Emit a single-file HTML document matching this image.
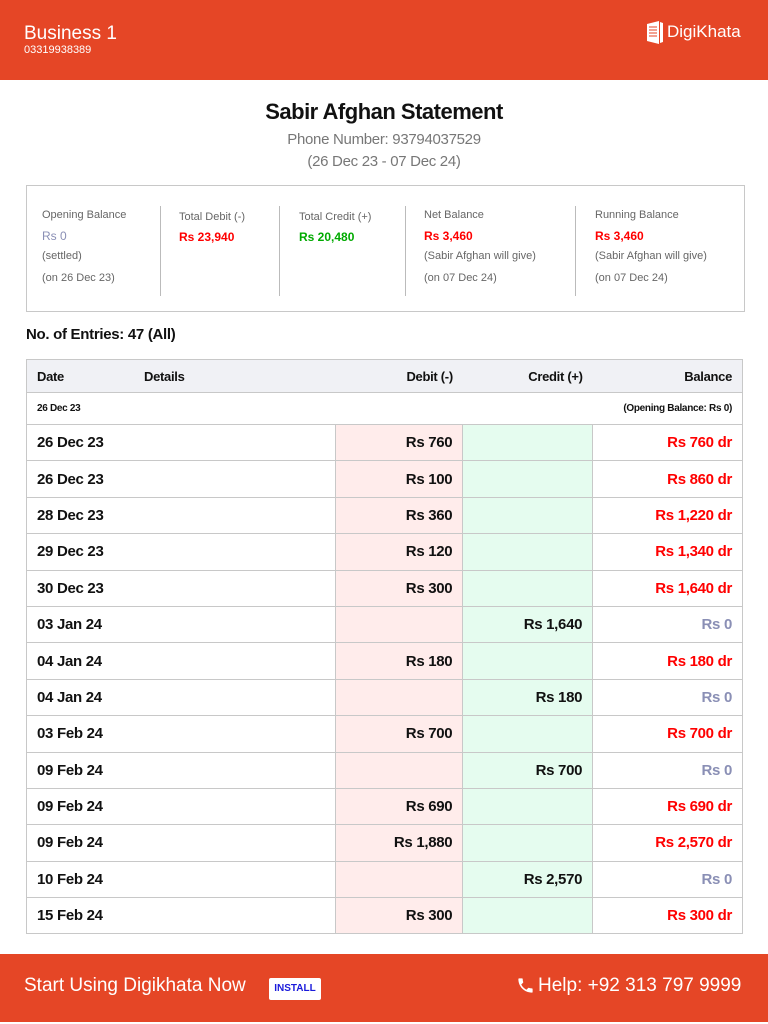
<!DOCTYPE html>
<html><head><meta charset="utf-8"><style>
*{margin:0;padding:0;box-sizing:border-box}
body{width:768px;height:1024px;background:#fff;font-family:"Liberation Sans",sans-serif;position:relative;overflow:hidden;color:#111}
.a{position:absolute;white-space:nowrap}
.hdr{position:absolute;left:0;top:0;width:768px;height:80px;background:#e54626}
.ftr{position:absolute;left:0;top:954px;width:768px;height:68px;background:#e54626}
.sb{border:1px solid #c8c8c8;position:absolute;left:26px;top:185px;width:719px;height:127px}
.vl{position:absolute;top:206px;width:1px;height:90px;background:#bbb}
.lbl{font-size:11px;color:#666}
.sm{font-size:11px;color:#666}
table{position:absolute;left:26px;top:359px;width:717px;border-collapse:collapse}
td{border:1px solid #c8c8c8;height:36.4px;font-size:15px;font-weight:bold;padding:0 10px;letter-spacing:-0.3px}
tr.h td{background:#f0f1f5;height:33px;font-size:13px;border-left:none;border-right:none}
tr.h td:first-child{border-left:1px solid #c8c8c8}
tr.h td:last-child{border-right:1px solid #c8c8c8}
tr.o td{height:32px;font-size:10px}
.d{background:#ffeceb;text-align:right}
.c{background:#e5fcef;text-align:right}
.r{text-align:right}
.red{color:#f00}
.g{color:#8a8fb5}
</style></head><body>
<div class="hdr"></div>
<div class="a" style="left:24px;top:23px;font-size:19px;color:#fff">Business 1</div>
<div class="a" style="left:24px;top:44px;font-size:11px;color:#fff">03319938389</div>
<svg class="a" style="left:645px;top:20px" width="20" height="25" viewBox="0 0 20 25"><path d="M2 4 L14 1 L14 24 L2 21 Z" fill="#fff"/><path d="M15 2 L18 3 L18 22 L15 23Z" fill="#fff"/><g stroke="#e54626" stroke-width="1"><line x1="4" y1="7" x2="12" y2="7"/><line x1="4" y1="10" x2="12" y2="10"/><line x1="4" y1="13" x2="12" y2="13"/><line x1="4" y1="16" x2="12" y2="16"/></g></svg>
<div class="a" style="left:667px;top:22px;font-size:17px;color:#fff">DigiKhata</div>

<div class="a" style="left:0;width:768px;text-align:center;top:99px;font-size:22px;font-weight:bold;letter-spacing:-0.5px">Sabir Afghan Statement</div>
<div class="a" style="left:0;width:768px;text-align:center;top:131px;font-size:15px;color:#777;letter-spacing:-0.3px">Phone Number: 93794037529</div>
<div class="a" style="left:0;width:768px;text-align:center;top:153px;font-size:15px;color:#777;letter-spacing:-0.3px">(26 Dec 23 - 07 Dec 24)</div>

<div class="sb"></div>
<div class="vl" style="left:160px"></div><div class="vl" style="left:279px"></div><div class="vl" style="left:405px"></div><div class="vl" style="left:575px"></div>
<div class="a lbl" style="left:42px;top:209px">Opening Balance</div>
<div class="a" style="left:42px;top:229px;font-size:12px;color:#8a8fb5">Rs 0</div>
<div class="a sm" style="left:42px;top:250px">(settled)</div>
<div class="a sm" style="left:42px;top:272px">(on 26 Dec 23)</div>
<div class="a lbl" style="left:179px;top:211px">Total Debit (-)</div>
<div class="a" style="left:179px;top:230px;font-size:12px;color:#f00;font-weight:bold">Rs 23,940</div>
<div class="a lbl" style="left:299px;top:211px">Total Credit (+)</div>
<div class="a" style="left:299px;top:230px;font-size:12px;color:#0a0;font-weight:bold">Rs 20,480</div>
<div class="a lbl" style="left:424px;top:209px">Net Balance</div>
<div class="a" style="left:424px;top:229px;font-size:12px;color:#f00;font-weight:bold">Rs 3,460</div>
<div class="a sm" style="left:424px;top:250px">(Sabir Afghan will give)</div>
<div class="a sm" style="left:424px;top:272px">(on 07 Dec 24)</div>
<div class="a lbl" style="left:595px;top:209px">Running Balance</div>
<div class="a" style="left:595px;top:229px;font-size:12px;color:#f00;font-weight:bold">Rs 3,460</div>
<div class="a sm" style="left:595px;top:250px">(Sabir Afghan will give)</div>
<div class="a sm" style="left:595px;top:272px">(on 07 Dec 24)</div>

<div class="a" style="left:26px;top:326px;font-size:15px;font-weight:bold;letter-spacing:-0.3px">No. of Entries: 47 (All)</div>

<table>
<colgroup><col style="width:309px"><col style="width:128px"><col style="width:130px"><col style="width:150px"></colgroup>
<tr class="h"><td><span style="display:inline-block;width:107px">Date</span>Details</td><td class="r" style="background:#f0f1f5">Debit (-)</td><td class="r" style="background:#f0f1f5">Credit (+)</td><td class="r">Balance</td></tr>
<tr class="o"><td style="border-right:none">26 Dec 23</td><td colspan="3" class="r" style="border-left:none">(Opening Balance: Rs 0)</td></tr>
<tr><td>26 Dec 23</td><td class="d">Rs 760</td><td class="c"></td><td class="r red">Rs 760 dr</td></tr>
<tr><td>26 Dec 23</td><td class="d">Rs 100</td><td class="c"></td><td class="r red">Rs 860 dr</td></tr>
<tr><td>28 Dec 23</td><td class="d">Rs 360</td><td class="c"></td><td class="r red">Rs 1,220 dr</td></tr>
<tr><td>29 Dec 23</td><td class="d">Rs 120</td><td class="c"></td><td class="r red">Rs 1,340 dr</td></tr>
<tr><td>30 Dec 23</td><td class="d">Rs 300</td><td class="c"></td><td class="r red">Rs 1,640 dr</td></tr>
<tr><td>03 Jan 24</td><td class="d"></td><td class="c">Rs 1,640</td><td class="r g">Rs 0</td></tr>
<tr><td>04 Jan 24</td><td class="d">Rs 180</td><td class="c"></td><td class="r red">Rs 180 dr</td></tr>
<tr><td>04 Jan 24</td><td class="d"></td><td class="c">Rs 180</td><td class="r g">Rs 0</td></tr>
<tr><td>03 Feb 24</td><td class="d">Rs 700</td><td class="c"></td><td class="r red">Rs 700 dr</td></tr>
<tr><td>09 Feb 24</td><td class="d"></td><td class="c">Rs 700</td><td class="r g">Rs 0</td></tr>
<tr><td>09 Feb 24</td><td class="d">Rs 690</td><td class="c"></td><td class="r red">Rs 690 dr</td></tr>
<tr><td>09 Feb 24</td><td class="d">Rs 1,880</td><td class="c"></td><td class="r red">Rs 2,570 dr</td></tr>
<tr><td>10 Feb 24</td><td class="d"></td><td class="c">Rs 2,570</td><td class="r g">Rs 0</td></tr>
<tr><td>15 Feb 24</td><td class="d">Rs 300</td><td class="c"></td><td class="r red">Rs 300 dr</td></tr>
</table>

<div class="ftr"></div>
<div class="a" style="left:24px;top:975px;font-size:19px;color:#fff">Start Using Digikhata Now</div>
<div class="a" style="left:269px;top:978px;width:52px;height:22px;background:#fff;border-radius:2px;color:#1a1adb;font-size:10px;font-weight:bold;text-align:center;line-height:22px">INSTALL</div>
<svg class="a" style="left:516px;top:976px" width="19" height="19" viewBox="0 0 24 24"><path fill="#fff" d="M6.6 10.8c1.4 2.8 3.8 5.1 6.6 6.6l2.2-2.2c.3-.3.7-.4 1-.2 1.1.4 2.3.6 3.6.6.6 0 1 .4 1 1V20c0 .6-.4 1-1 1C10.6 21 3 13.4 3 4c0-.6.4-1 1-1h3.5c.6 0 1 .4 1 1 0 1.3.2 2.5.6 3.6.1.3 0 .7-.2 1z"/></svg>
<div class="a" style="left:538px;top:975px;font-size:19px;color:#fff">Help: +92 313 797 9999</div>
</body></html>
